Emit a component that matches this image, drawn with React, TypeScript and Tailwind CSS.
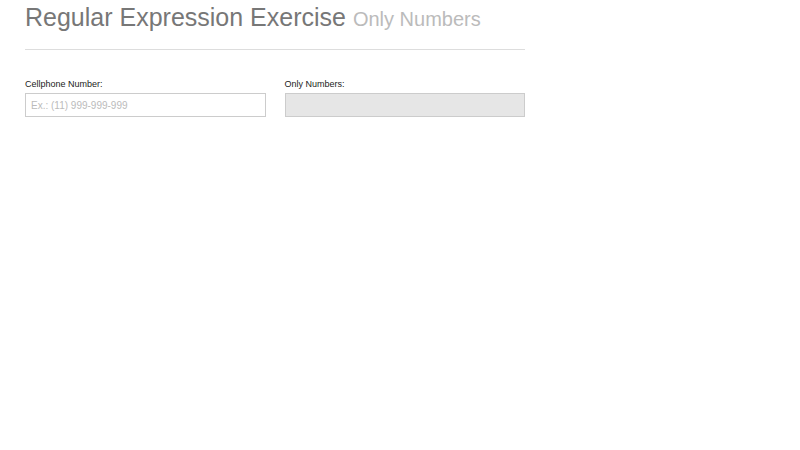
export default function App() {
  return (
    <div className="min-h-[450px] w-[800px] bg-white font-['Liberation_Sans',Arial,sans-serif]">
      <div className="w-[500px] ml-[25px] pt-[1px]">
        <div className="pb-[14px] border-b border-[#dddddd]">
          <h1 className="text-[25px] leading-[32px] text-[#777777]">
            Regular Expression Exercise{" "}
            <span className="text-[20px] text-[#bbbbbb]">Only Numbers</span>
          </h1>
        </div>
        <div className="mt-[29px] grid grid-cols-2 gap-[19px]">
          <div className="flex flex-col">
            <label className="text-[9px] leading-[11px] text-[#222222] mb-[3px]">Cellphone Number:</label>
            <input
              className="h-[24px] border border-[#cccccc] bg-white px-[5px] text-[10px] text-[#555] placeholder:text-[#bbbbbb] outline-none"
              placeholder="Ex.: (11) 999-999-999"
            />
          </div>
          <div className="flex flex-col">
            <label className="text-[9px] leading-[11px] text-[#222222] mb-[3px]">Only Numbers:</label>
            <input
              disabled
              className="h-[24px] border border-[#cccccc] bg-[#e6e6e6] px-[5px] text-[10px] outline-none"
            />
          </div>
        </div>
      </div>
    </div>
  );
}
